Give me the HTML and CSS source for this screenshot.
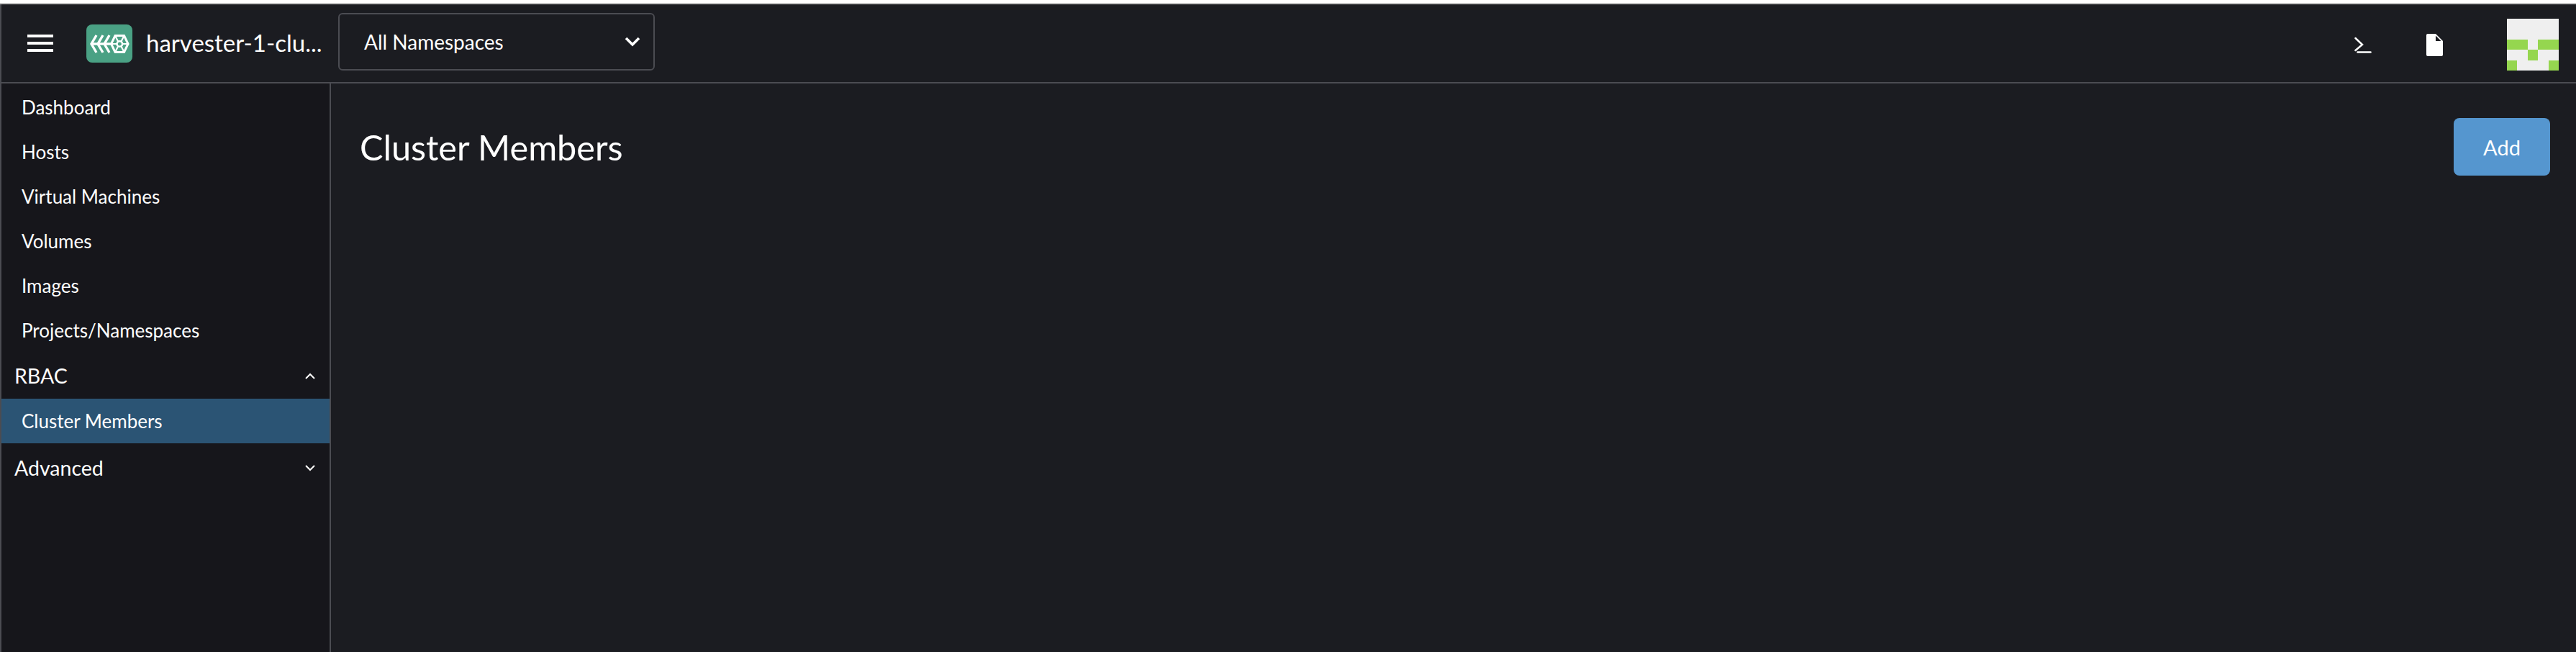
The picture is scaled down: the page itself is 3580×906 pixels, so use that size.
FILE: index.html
```html
<!DOCTYPE html>
<html lang="en">
<head>
  <meta charset="UTF-8" />
  <title>Cluster Members - Harvester</title>
  <link rel="stylesheet" href="styles.css">
</head>
<body>
  <div class="topline"></div>
  <header class="header">
    <button class="menu-btn" type="button" aria-label="Menu">
      <svg width="36" height="24" viewBox="0 0 36 24"><path d="M0 2h36M0 12h36M0 22h36" stroke="#fff" stroke-width="4" fill="none"/></svg>
    </button>
    <div class="cluster-logo">
      <svg width="64" height="53" viewBox="0 0 64 53" fill="none" stroke="#fff" stroke-width="3.4">
        <path d="M6 27h28"/>
        <path d="M14 15 7 27l7 12M23 15l-7 12 7 12M32 15l-7 12 7 12"/>
        <path d="M40 15.500h12.500L58 27l-5.500 11.500H40L34.500 27z" stroke-width="3"/>
        <circle cx="46.300" cy="27" r="3.800" stroke-width="2.600"/>
        <path d="M40 15.500l4 8M52.500 15.500l-4 8M40 38.500l4-8M52.500 38.500l-4-8M34.500 27h8M50 27h8" stroke-width="2.200"/>
      </svg>
    </div>
    <div class="cluster-name">harvester-1-clu...</div>
    <div class="ns-select">
      <span>All Namespaces</span>
      <svg width="22" height="14" viewBox="0 0 22 14"><path d="M2 2l9 9 9-9" stroke="#fff" stroke-width="3.6" fill="none"/></svg>
    </div>
    <div class="header-actions">
      <svg class="icon-shell" width="24" height="23" viewBox="0 0 24 23" fill="none" stroke="#fff" stroke-width="2.500" stroke-linecap="round"><path d="M1.500 2l9.500 9-9.500 8"/><path d="M4.500 21.500h18"/></svg>
      <svg class="icon-file" width="23" height="31" viewBox="0 0 23 31"><path fill="#fff" d="M2 0h11l10 10v19a2 2 0 0 1-2 2H2a2 2 0 0 1-2-2V2a2 2 0 0 1 2-2z"/><path fill="#1b1c21" d="M13 2.500l7.500 7.500H13z"/></svg>
      <div class="avatar">
        <svg width="72" height="72" viewBox="0 0 5 5" shape-rendering="crispEdges"><rect width="5" height="5" fill="#efefef"/><path fill="#95d64f" d="M0 2h2v1H0zM3 2h2v1H3zM2 3h1v1H2zM0 4h1v1H0zM4 4h1v1H4z"/></svg>
      </div>
    </div>
  </header>

  <div class="layout">
    <nav class="sidebar">
      <a class="nav-item">Dashboard</a>
      <a class="nav-item">Hosts</a>
      <a class="nav-item">Virtual Machines</a>
      <a class="nav-item">Volumes</a>
      <a class="nav-item">Images</a>
      <a class="nav-item">Projects/Namespaces</a>
      <div class="nav-group">
        <span>RBAC</span>
        <svg width="14" height="9" viewBox="0 0 14 9"><path d="M1 8l6-6 6 6" stroke="#fff" stroke-width="2" fill="none"/></svg>
      </div>
      <a class="nav-item active">Cluster Members</a>
      <div class="nav-group group-last">
        <span>Advanced</span>
        <svg width="14" height="9" viewBox="0 0 14 9"><path d="M1 1l6 6 6-6" stroke="#fff" stroke-width="2" fill="none"/></svg>
      </div>
    </nav>
    <main class="content">
      <div class="page-head">
        <h1>Cluster Members</h1>
        <button class="btn-add" type="button">Add</button>
      </div>
    </main>
  </div>
</body>
</html>
```

FILE: styles.css
```css
* {
  margin: 0;
  padding: 0;
  box-sizing: border-box;
}
html, body {
  height: 100%;
  overflow: hidden;
}
body {
  display: flex;
  flex-direction: column;
  font-family: 'Lato', sans-serif;
  background: #1b1c21;
  color: #fff;
}
.topline {
  height: 6px;
  flex: none;
  background: #1b1c21;
  border-top: 4px solid #fff;
  border-bottom: 2px solid #c4c4c4;
}
.header {
  height: 110px;
  flex: none;
  display: flex;
  align-items: center;
  padding-left: 36px;
  border-bottom: 2px solid #4b4c52;
  border-left: 2px solid #4b4c52;
}
.menu-btn {
  display: flex;
  background: none;
  border: none;
}
.cluster-logo {
  width: 64px;
  height: 53px;
  margin-left: 46px;
  display: flex;
  background: #4aa184;
  border-radius: 8px;
}
.cluster-name {
  width: 267px;
  margin-left: 19px;
  margin-bottom: 2px;
  font-size: 33px;
  white-space: nowrap;
}
.ns-select {
  width: 440px;
  height: 80px;
  margin-bottom: 4px;
  display: flex;
  align-items: center;
  justify-content: space-between;
  padding: 0 18px 0 34px;
  border: 2px solid #4b4c52;
  border-radius: 6px;
  font-size: 28px;
}
.header-actions {
  margin-left: auto;
  margin-top: 4px;
  padding-right: 24px;
  display: flex;
  align-items: center;
}
.icon-shell {
  margin-right: 76px;
}
.icon-file {
  margin-right: 89px;
}
.avatar {
  display: flex;
}
.layout {
  flex: 1;
  display: flex;
  min-height: 0;
}
.sidebar {
  width: 460px;
  flex: none;
  display: flex;
  flex-direction: column;
  padding-top: 2px;
  background: #16161b;
  border-left: 2px solid #4b4c52;
  border-right: 2px solid #4b4c52;
}
.nav-item {
  height: 62px;
  flex: none;
  display: flex;
  align-items: center;
  padding-left: 28px;
  font-size: 26px;
}
.nav-item.active {
  background: #2b5474;
}
.nav-group {
  height: 64px;
  flex: none;
  display: flex;
  align-items: center;
  justify-content: space-between;
  padding: 0 20px 0 18px;
  font-size: 28.500px;
}
.group-last {
  height: 68px;
}
.content {
  flex: 1;
  padding: 48px 36px 0 40px;
}
.page-head {
  display: flex;
  align-items: center;
  justify-content: space-between;
}
.page-head h1 {
  font-size: 48.600px;
  font-weight: 400;
}
.btn-add {
  width: 134px;
  height: 80px;
  background: #5596cf;
  border: none;
  border-radius: 8px;
  color: #fff;
  font-family: inherit;
  font-size: 29px;
}
```
